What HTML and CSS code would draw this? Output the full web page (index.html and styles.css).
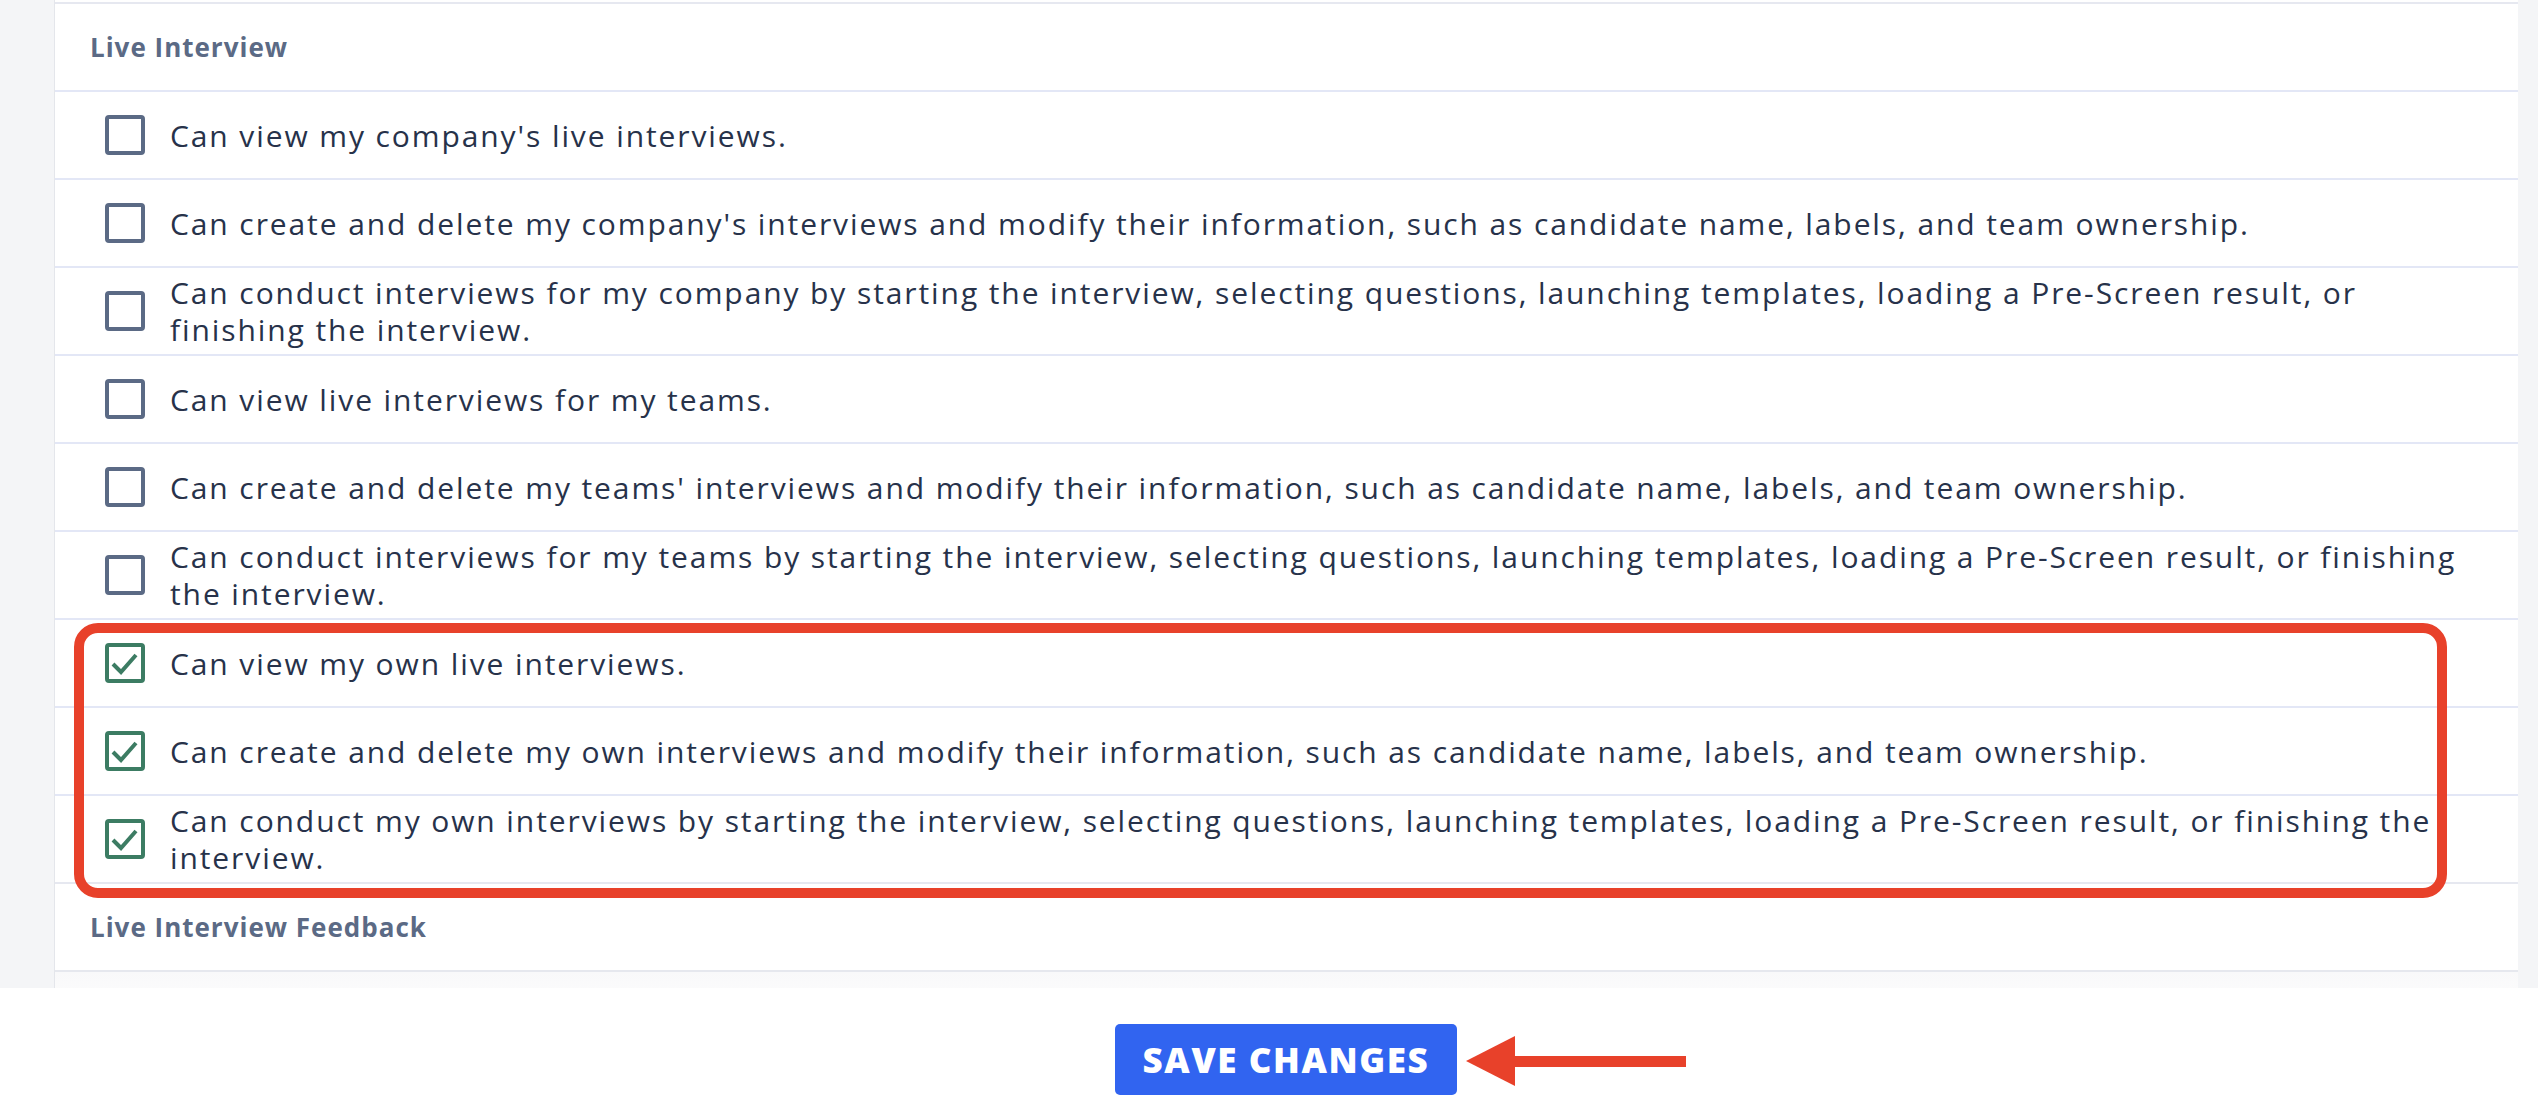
FILE: index.html
```html
<!DOCTYPE html>
<html lang="en">
  <head>
    <meta charset="UTF-8" />
    <meta name="viewport" content="width=device-width, initial-scale=1.0" />
    <title>Role Permissions</title>
    <link rel="stylesheet" href="styles.css">
  </head>
  <body>
    <div class="main">
      <div class="card">
        <div class="section-title">Live Interview</div>

        <label class="perm">
          <span class="box"></span>
          <span class="text">Can view my company's live interviews.</span>
        </label>
        <label class="perm">
          <span class="box"></span>
          <span class="text">Can create and delete my company's interviews and modify their information, such as candidate name, labels, and team ownership.</span>
        </label>
        <label class="perm">
          <span class="box"></span>
          <span class="text">Can conduct interviews for my company by starting the interview, selecting questions, launching templates, loading a Pre-Screen result, or finishing the interview.</span>
        </label>
        <label class="perm">
          <span class="box"></span>
          <span class="text">Can view live interviews for my teams.</span>
        </label>
        <label class="perm">
          <span class="box"></span>
          <span class="text">Can create and delete my teams' interviews and modify their information, such as candidate name, labels, and team ownership.</span>
        </label>
        <label class="perm">
          <span class="box"></span>
          <span class="text">Can conduct interviews for my teams by starting the interview, selecting questions, launching templates, loading a Pre-Screen result, or finishing the interview.</span>
        </label>
        <label class="perm">
          <span class="box checked">
            <svg viewBox="0 0 32 32" width="32" height="32"><path d="M4 17 L12 25 L27 8" /></svg>
          </span>
          <span class="text">Can view my own live interviews.</span>
        </label>
        <label class="perm">
          <span class="box checked">
            <svg viewBox="0 0 32 32" width="32" height="32"><path d="M4 17 L12 25 L27 8" /></svg>
          </span>
          <span class="text">Can create and delete my own interviews and modify their information, such as candidate name, labels, and team ownership.</span>
        </label>
        <label class="perm">
          <span class="box checked">
            <svg viewBox="0 0 32 32" width="32" height="32"><path d="M4 17 L12 25 L27 8" /></svg>
          </span>
          <span class="text">Can conduct my own interviews by starting the interview, selecting questions, launching templates, loading a Pre-Screen result, or finishing the interview.</span>
        </label>

        <div class="section-title last">Live Interview Feedback</div>
        <div class="fade"></div>
      </div>

      <!-- annotation around the checked rows -->
      <div class="highlight"></div>
    </div>

    <div class="footer">
      <button type="button" class="save">SAVE CHANGES</button>
      <svg class="arrow" viewBox="0 0 222 52" width="222" height="52">
        <polygon points="0,25 49,0 49,50" />
        <rect x="48" y="20" width="172" height="11" />
      </svg>
    </div>
  </body>
</html>
```

FILE: styles.css
```css
body {
  margin: 0;
  font-family: "Open Sans", Lato, Arial, sans-serif;
  background: #ffffff;
  color: #27324a;
}
.main {
  position: relative;
  height: 988px;
  overflow: hidden;
  background: #f4f5f7;
  padding: 0 20px 0 54px;
  box-sizing: border-box;
}
.card {
  background: #ffffff;
  border-left: 1px solid #e4e6eb;
  padding-top: 2px;
}
.section-title {
  display: flex;
  align-items: center;
  height: 86px;
  padding-left: 35px;
  border-top: 2px solid #e6e8f0;
  font-size: 26px;
  font-weight: 700;
  letter-spacing: 1px;
  color: #5b6a85;
}
.section-title.last {
  border-bottom: 2px solid #e6e8ee;
}
.perm {
  display: flex;
  align-items: center;
  gap: 25px;
  min-height: 88px;
  padding: 0 40px 0 50px;
  border-top: 2px solid #e3e7f6;
  box-sizing: border-box;
}
.box {
  flex: none;
  width: 40px;
  height: 40px;
  border: 4px solid #5b6a85;
  border-radius: 4px;
  box-sizing: border-box;
  display: flex;
  align-items: center;
  justify-content: center;
}
.box.checked {
  border-color: #3c7c63;
}
.box svg path {
  fill: none;
  stroke: #3c7c63;
  stroke-width: 4;
}
.text {
  font-size: 30px;
  font-weight: 500;
  line-height: 37px;
  letter-spacing: 1.9px;
}
.fade {
  height: 40px;
  background: linear-gradient(#f9f9fa, #fdfdfd);
}
.highlight {
  position: absolute;
  left: 74px;
  top: 623px;
  width: 2373px;
  height: 275px;
  border: 10px solid #e8412a;
  border-radius: 24px;
  box-sizing: border-box;
}
.footer {
  position: relative;
  height: 122px;
  display: flex;
  justify-content: center;
  align-items: flex-start;
  padding: 36px 20px 0 54px;
  box-sizing: border-box;
}
.save {
  width: 342px;
  height: 71px;
  background: #3164f0;
  color: #ffffff;
  border: none;
  border-radius: 5px;
  font-family: "Open Sans", Arial, sans-serif;
  font-size: 35px;
  font-weight: 800;
  letter-spacing: 1.6px;
  cursor: pointer;
}
.arrow {
  position: absolute;
  left: 1466px;
  top: 48px;
}
.arrow polygon,
.arrow rect {
  fill: #e8412a;
}
```
